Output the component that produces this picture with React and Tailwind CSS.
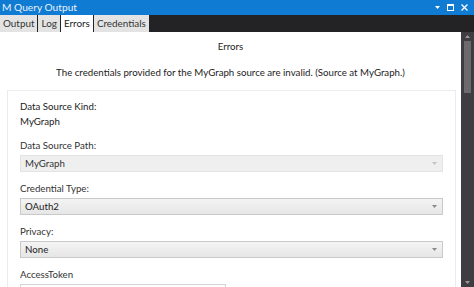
import { useState } from "react";

const tabs = ["Output", "Log", "Errors", "Credentials"];

const SelectBox = ({ value, disabled }) => (
  <div
    className={`flex items-center justify-between h-[17px] pl-[4px] pr-[5px] border ${
      disabled
        ? "bg-[#efefef] border-[#e4e4e4] text-[#333]"
        : "bg-gradient-to-b from-[#f4f4f4] to-[#e6e6e6] border-[#c9c9c9] text-[#222]"
    }`}
  >
    <span>{value}</span>
    <svg width="5" height="3" viewBox="0 0 5 3">
      <path d="M0 0 L5 0 L2.5 3 Z" fill={disabled ? "#c4c4c4" : "#8a8a8a"} />
    </svg>
  </div>
);

const App = () => {
  const [active, setActive] = useState("Errors");

  return (
    <div
      className="w-[474px] h-[287px] overflow-hidden flex flex-col bg-white text-[9.7px]"
      style={{ fontFamily: 'Lato, "Open Sans", sans-serif' }}
    >
      {/* title bar */}
      <div className="h-[15px] bg-[#0f7bd3] flex items-center justify-between pl-[2px] pr-[6px] text-[#e8f2fb] text-[10.2px] leading-none">
        <span>M Query Output</span>
        <div className="flex items-center gap-[7px]">
          <svg width="5" height="3" viewBox="0 0 5 3">
            <path d="M0 0 L5 0 L2.5 3 Z" fill="#fff" />
          </svg>
          <svg width="7" height="7" viewBox="0 0 7 7">
            <rect x="0.5" y="0.5" width="6" height="6" fill="none" stroke="#fff" />
            <rect x="0.5" y="0.5" width="6" height="1.5" fill="#fff" />
          </svg>
          <svg width="7" height="7" viewBox="0 0 7 7">
            <path d="M0.5 0.5 L6.5 6.5 M6.5 0.5 L0.5 6.5" stroke="#fff" strokeWidth="1.3" />
          </svg>
        </div>
      </div>

      {/* tabs */}
      <div className="h-[17px] bg-[#232325] flex items-end gap-[1px]">
        {tabs.map((t) => (
          <button
            key={t}
            onClick={() => setActive(t)}
            className={`h-[17px] px-[3px] text-[9.9px] leading-none ${
              active === t ? "bg-white text-[#222]" : "bg-[#e3e3e3] text-[#333]"
            }`}
          >
            {t}
          </button>
        ))}
      </div>

      {/* body */}
      <div className="flex flex-1 min-h-0">
        <div className="flex-1 pt-[8px] text-[#222]">
          <p className="text-center leading-[13px]">Errors</p>
          <p className="text-center mt-[13px] leading-[13px]">
            The credentials provided for the MyGraph source are invalid. (Source at MyGraph.)
          </p>

          <div className="mt-[11px] ml-[7px] mr-[5px] border border-[#ececec] pt-[9px] px-[12px]">
            <p className="leading-[13px]">Data Source Kind:</p>
            <p className="leading-[13px] mt-[2px]">MyGraph</p>

            <p className="leading-[13px] mt-[11px] text-[#333]">Data Source Path:</p>
            <div className="mt-[3px]">
              <SelectBox value="MyGraph" disabled />
            </div>

            <p className="leading-[13px] mt-[10px] text-[#333]">Credential Type:</p>
            <div className="mt-[3px]">
              <SelectBox value="OAuth2" />
            </div>

            <p className="leading-[13px] mt-[10px] text-[#333]">Privacy:</p>
            <div className="mt-[3px]">
              <SelectBox value="None" />
            </div>

            <p className="leading-[13px] mt-[10px] text-[#333]">AccessToken</p>
            <div className="mt-[3px] w-[206px] h-[17px] border border-[#d4d4d4] bg-white" />
          </div>
        </div>

        {/* scrollbar */}
        <div className="w-[13px] bg-[#3e3e42] flex flex-col items-center">
          <svg className="mt-[3px]" width="5" height="3" viewBox="0 0 5 3">
            <path d="M0 3 L5 3 L2.5 0 Z" fill="#9a9a9a" />
          </svg>
          <div className="mt-[3px] w-[7px] h-[52px] bg-[#6b6b6e]" />
          <div className="flex-1" />
          <svg className="mb-[3px]" width="5" height="3" viewBox="0 0 5 3">
            <path d="M0 0 L5 0 L2.5 3 Z" fill="#9a9a9a" />
          </svg>
        </div>
      </div>
    </div>
  );
};

export default App;
